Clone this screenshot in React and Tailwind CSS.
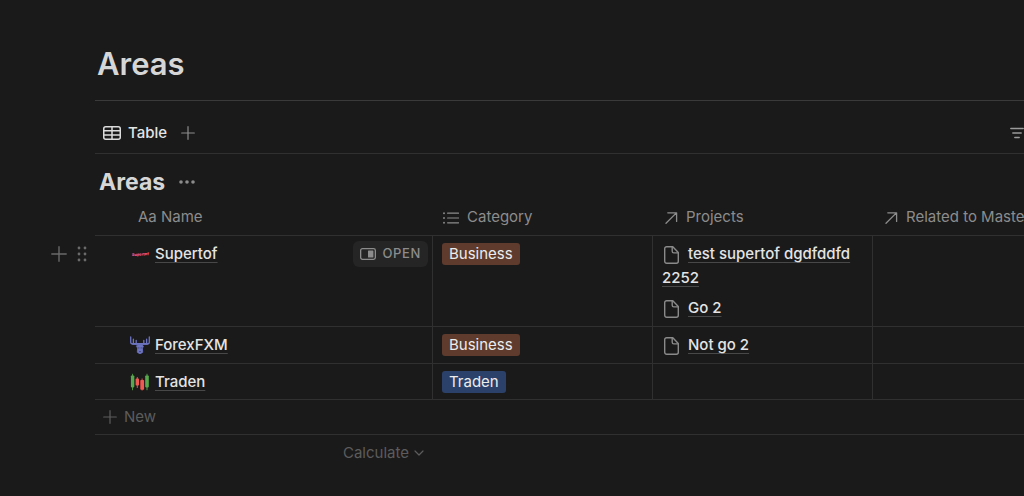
import { ChevronDown } from 'lucide-react';

const PlusIcon = ({ size = 14 }) => (
    <svg width={size} height={size} viewBox="0 0 14 14" fill="none" stroke="currentColor" strokeWidth="1.2" strokeLinecap="round" aria-hidden="true">
        <path d="M7 0.7v12.6M0.7 7h12.6" />
    </svg>
);

const TableIcon = () => (
    <svg width="18" height="14" viewBox="0 0 18 14" fill="none" stroke="#dcdcdc" strokeWidth="1.5" aria-hidden="true">
        <rect x="0.75" y="0.75" width="16.5" height="12.5" rx="2" />
        <path d="M1 4.8h16M1 9h16M9 1v12" />
    </svg>
);

const FilterIcon = () => (
    <svg width="14" height="12" viewBox="0 0 14 12" fill="none" stroke="#9b9b9b" strokeWidth="1.4" strokeLinecap="round" aria-hidden="true">
        <path d="M0.8 1.5h12.4M2.8 6h8.4M4.8 10.5h4.4" />
    </svg>
);

const ListIcon = () => (
    <svg width="16" height="12" viewBox="0 0 16 12" aria-hidden="true">
        <path d="M4.6 1.2h11M4.6 6h11M4.6 10.8h11" stroke="#8c8c8c" strokeWidth="1.2" strokeLinecap="round" />
        <g fill="#8c8c8c">
            <circle cx="1" cy="1.2" r="0.95" />
            <circle cx="1" cy="6" r="0.95" />
            <circle cx="1" cy="10.8" r="0.95" />
        </g>
    </svg>
);

const RelationIcon = () => (
    <svg width="13" height="12" viewBox="0 0 13 12" fill="none" stroke="#8c8c8c" strokeWidth="1.3" strokeLinecap="round" strokeLinejoin="round" aria-hidden="true">
        <path d="M1 11.2 11.4 0.9M2.8 0.8h8.8v8.6" />
    </svg>
);

const PageIcon = () => (
    <svg width="15" height="18" viewBox="0 0 15 18" fill="none" stroke="#8a8a8a" strokeWidth="1.4" strokeLinejoin="round" className="inline-block align-middle" aria-hidden="true">
        <path d="M2.7 0.7h6.1l5.5 5.8v8.8a2 2 0 0 1-2 2H2.7a2 2 0 0 1-2-2V2.7a2 2 0 0 1 2-2z" />
        <path d="M8.2 1v4.3a1.6 1.6 0 0 0 1.6 1.6h4.3" />
    </svg>
);

const PeekIcon = () => (
    <svg width="16" height="12" viewBox="0 0 16 12" aria-hidden="true">
        <rect x="0.65" y="0.65" width="14.7" height="10.7" rx="1.8" fill="none" stroke="#8c8c8c" strokeWidth="1.3" />
        <rect x="8" y="2.4" width="5.4" height="7.2" rx="0.6" fill="#8c8c8c" />
    </svg>
);

const DragIcon = () => (
    <svg width="10" height="16" viewBox="0 0 10 16" fill="#6a6a6a" aria-hidden="true">
        {[2, 8].map((x) => [2, 8, 14].map((y) => <circle key={`${x}-${y}`} cx={x} cy={y} r="1.4" />))}
    </svg>
);

const DotsIcon = () => (
    <svg width="16" height="4" viewBox="0 0 16 4" fill="#8c8c8c" aria-hidden="true">
        <circle cx="2" cy="2" r="1.8" />
        <circle cx="8" cy="2" r="1.8" />
        <circle cx="14" cy="2" r="1.8" />
    </svg>
);

const SupertofLogo = () => (
    <svg width="20" height="20" viewBox="0 0 20 20" aria-hidden="true">
        <text x="1.8" y="11.6" fontSize="3.8" fontWeight="900" fontFamily="Inter, sans-serif" fill="#f2568c" transform="rotate(-3 10 10)">
            Supertof
        </text>
    </svg>
);

const MooseLogo = () => (
    <svg width="20" height="20" viewBox="0 0 20 20" fill="none" stroke="#6c73c0" strokeLinecap="round" aria-hidden="true">
        <path d="M0.7 2v5.2q0 1.8 2 1.8h14.6q2 0 2-1.8V2M3.4 4.2v4M6.2 5.4v3M13.8 5.4v3M16.6 4.2v4" strokeWidth="1.3" />
        <path d="M3 8.8h14" strokeWidth="1.8" />
        <path d="M7.6 10h4.8l1 1.6-1 1.5.3 4.2q-2.7 2.8-5.4 0l.3-4.2-1-1.5z" fill="#6c73c0" strokeWidth="0.8" />
        <path d="M8.8 12.6v.6M11.2 12.6v.6M9.4 16.6h1.2" stroke="#2b2d4a" strokeWidth="0.6" />
    </svg>
);

const CandlesLogo = () => (
    <svg width="20" height="20" viewBox="0 0 20 20" aria-hidden="true">
        <path d="M2.6 1.8v16.4M17 1.8v16.4" stroke="#58a84c" strokeWidth="0.9" />
        <path d="M7.3 5v11M12.1 6.5v12" stroke="#ef5b53" strokeWidth="0.9" />
        <rect x="0.9" y="3.4" width="3.4" height="12" rx="0.8" fill="#58a84c" />
        <rect x="5.6" y="6.6" width="3.4" height="7" rx="0.8" fill="#ef5b53" />
        <rect x="10.3" y="8" width="3.8" height="9.8" rx="0.8" fill="#ef5b53" />
        <rect x="15.2" y="3.4" width="3.6" height="12" rx="0.8" fill="#58a84c" />
    </svg>
);

const rows = [
    { name: 'Supertof', Logo: SupertofLogo, category: 'Business', projects: ['test supertof dgdfddfd 2252', 'Go 2'], active: true },
    { name: 'ForexFXM', Logo: MooseLogo, category: 'Business', projects: ['Not go 2'] },
    { name: 'Traden', Logo: CandlesLogo, category: 'Traden', projects: [] },
];

const tagColors = {
    Business: 'bg-[#5e3b2d]',
    Traden: 'bg-[#2b4169]',
};

const PageLink = ({ children }) => (
    <a href="#" className="font-medium text-[#e4e4e4] underline decoration-[#484848] decoration-1 underline-offset-[3px] [text-decoration-skip-ink:none]">{children}</a>
);

const HeaderCell = ({ icon, label }) => (
    <th className="border-b border-[#303030] p-0 font-normal">
        <div className="flex h-[35px] items-center gap-2 whitespace-nowrap pl-[10px]">
            {icon}
            {label}
        </div>
    </th>
);

const AreaRow = ({ row }) => (
    <tr className="align-top">
        <td className="p-0">
            {row.active && (
                <div className="flex h-[35px] items-center justify-end gap-[10px] pr-2 text-[#6a6a6a]">
                    <button aria-label="Add row"><PlusIcon size={16} /></button>
                    <button aria-label="Drag row"><DragIcon /></button>
                </div>
            )}
        </td>
        <td className="border-r border-b border-[#303030] p-0">
            <div className="flex h-[35px] items-center gap-[5px] pr-1 pl-[35px]">
                <row.Logo />
                <span className="pt-[2px]"><PageLink>{row.name}</PageLink></span>
                {row.active && (
                    <button className="ml-auto flex h-[26px] items-center gap-[6px] rounded-md bg-[#252525] px-[7px] text-[13px] font-medium tracking-wider text-[#8c8c8c]">
                        <PeekIcon />
                        OPEN
                    </button>
                )}
            </div>
        </td>
        <td className="border-r border-b border-[#303030] p-0">
            <div className="flex h-[35px] items-center pl-[9px]">
                <span className={`flex h-[22px] items-center rounded-[3px] px-[7px] pt-[2px] text-[#ececec] ${tagColors[row.category]}`}>
                    {row.category}
                </span>
            </div>
        </td>
        <td className="border-r border-b border-[#303030] p-0">
            {row.projects.length > 0 && (
                <ul className="flex flex-col gap-[6px] px-[9px] py-[6px] leading-6">
                    {row.projects.map((project) => (
                        <li key={project}>
                            <span className="mr-[9px] ml-[2px]"><PageIcon /></span>
                            <PageLink>{project}</PageLink>
                        </li>
                    ))}
                </ul>
            )}
        </td>
        <td className="border-b border-[#303030] p-0" />
    </tr>
);

const App = () => (
    <main className="min-h-screen overflow-hidden bg-[#1a1a1a] pt-10 font-['Inter',sans-serif] text-[15px] text-[#8c8c8c]">
        <header className="ml-[95px] border-b border-[#3a3a3a] pb-3 pl-[2px]">
            <h1 className="text-[31px] leading-[48px] font-semibold text-[#d6d6d6]">Areas</h1>
        </header>

        {/* View tabs */}
        <nav className="ml-[95px] flex items-center border-b border-[#303030] pt-4 pb-1 pl-2">
            <button className="flex h-8 items-center gap-[7px] font-medium text-[#e4e4e4]">
                <TableIcon />
                Table
            </button>
            <button aria-label="Add view" className="ml-[14px]"><PlusIcon /></button>
            <button aria-label="Filter" className="ml-auto"><FilterIcon /></button>
        </nav>

        <div className="ml-[99px] flex h-[46px] items-center gap-[14px] pt-[10px]">
            <h2 className="text-[23px] leading-9 font-bold text-[#d6d6d6]">Areas</h2>
            <button aria-label="More options"><DotsIcon /></button>
        </div>

        <table className="w-full table-fixed border-separate border-spacing-0 text-left">
            <colgroup>
                <col className="w-[95px]" />
                <col className="w-[338px]" />
                <col className="w-[220px]" />
                <col className="w-[220px]" />
                <col />
            </colgroup>
            <thead>
                <tr>
                    <td className="p-0" />
                    <th className="border-b border-[#303030] p-0 pl-[43px] font-normal">Aa Name</th>
                    <HeaderCell icon={<ListIcon />} label="Category" />
                    <HeaderCell icon={<span className="ml-[2px]"><RelationIcon /></span>} label="Projects" />
                    <HeaderCell icon={<span className="ml-[2px]"><RelationIcon /></span>} label="Related to Maste" />
                </tr>
            </thead>
            <tbody>
                {rows.map((row) => <AreaRow key={row.name} row={row} />)}
            </tbody>
            <tfoot className="text-[#5c5c5c]">
                <tr>
                    <td className="p-0" />
                    <td colSpan={4} className="border-b border-[#303030] p-0">
                        <button className="flex h-[34px] items-center gap-[7px] pl-2">
                            <PlusIcon />
                            New
                        </button>
                    </td>
                </tr>
                <tr>
                    <td className="p-0" />
                    <td className="p-0">
                        <button className="ml-auto flex h-9 items-center gap-[2px] pr-[6px]">
                            Calculate
                            <ChevronDown size={16} strokeWidth={1.8} />
                        </button>
                    </td>
                </tr>
            </tfoot>
        </table>
    </main>
);

export default App;
